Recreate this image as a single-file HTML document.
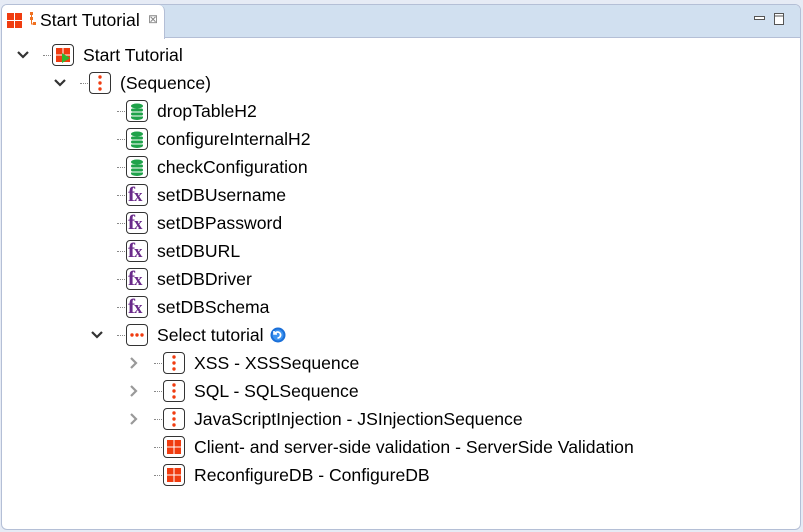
<!DOCTYPE html>
<html><head><meta charset="utf-8"><style>
*{margin:0;padding:0;box-sizing:border-box}
body{width:803px;height:532px;background:#e6ebf5;position:relative;overflow:hidden;font-family:"Liberation Sans",sans-serif;font-size:17.6px;color:#000}
#frame{position:absolute;left:1px;top:4px;width:800px;height:526px;background:#fff;border:1px solid #b4bfd6;border-radius:6px;overflow:hidden}
#bar{position:absolute;left:0;top:0;right:0;height:33px;background:#d1e0f0;border-bottom:1px solid #b4bfd6}
#tab{position:absolute;left:0;top:0;width:163px;height:34px;background:#fff;border-right:1px solid #b4bfd6;border-radius:0 6px 0 0}
.row{position:absolute;height:28px;line-height:28px;white-space:nowrap}
.ic{position:absolute;width:22px;height:22px;border:1px solid #333;border-radius:4px;background:#fff;top:3px;line-height:normal}
.dots{position:absolute;top:14px;width:8px;border-top:1px dotted #888}
.chev{position:absolute;top:6px;width:16px;height:16px}
</style></head><body>
<div id="frame">
<div id="bar"></div>
<div id="tab">
 <svg style="position:absolute;left:5px;top:7px" width="34" height="20"><rect x="0" y="1" width="7" height="7" fill="#f03c10"/><rect x="8" y="1" width="7" height="7" fill="#f03c10"/><rect x="0" y="9" width="7" height="7" fill="#f03c10"/><rect x="8" y="9" width="7" height="7" fill="#f03c10"/><rect x="23" y="0" width="3" height="3" fill="#f07020"/><rect x="23" y="5" width="3" height="3" fill="#f07020"/><rect x="26" y="10" width="3" height="3" fill="#f07020"/><path d="M24.5 3v9h2" stroke="#f07020" fill="none"/></svg>
 <span style="position:absolute;left:38px;top:5px;font-size:17.6px">Start Tutorial</span>
 <span style="position:absolute;left:146px;top:7px;font-size:12px;color:#888">⊠</span>
</div>
<svg style="position:absolute;left:752px;top:7px" width="30" height="14"><rect x="0.5" y="4.5" width="10" height="3" fill="#fff" stroke="#555"/><rect x="20.5" y="1.5" width="9" height="11" fill="#fff" stroke="#555"/><line x1="20" y1="4" x2="30" y2="4" stroke="#555"/></svg>
</div>
<div id="tree" style="position:absolute;left:0;top:0">
</div>
<script>
const seq='<svg width="20" height="20" style="position:absolute;left:0;top:0"><circle cx="10" cy="4" r="1.7" fill="#f03c10"/><circle cx="10" cy="10" r="1.7" fill="#f03c10"/><circle cx="10" cy="16" r="1.7" fill="#f03c10"/></svg>';
const sel='<svg width="20" height="20" style="position:absolute;left:0;top:0"><circle cx="5" cy="10" r="1.7" fill="#f03c10"/><circle cx="10" cy="10" r="1.7" fill="#f03c10"/><circle cx="15" cy="10" r="1.7" fill="#f03c10"/></svg>';
const grid='<svg width="20" height="20" style="position:absolute;left:0;top:0"><rect x="3" y="3" width="6.5" height="6.5" fill="#f03c10"/><rect x="10.5" y="3" width="6.5" height="6.5" fill="#f03c10"/><rect x="3" y="10.5" width="6.5" height="6.5" fill="#f03c10"/><rect x="10.5" y="10.5" width="6.5" height="6.5" fill="#f03c10"/></svg>';
const start='<svg width="20" height="20" style="position:absolute;left:0;top:0"><rect x="3" y="3" width="6.5" height="6.5" fill="#f03c10"/><rect x="10.5" y="3" width="6.5" height="6.5" fill="#f03c10"/><rect x="3" y="10.5" width="6.5" height="6.5" fill="#f03c10"/><rect x="10.5" y="10.5" width="6.5" height="6.5" fill="#f03c10"/><path d="M9 8l8 5-8 5z" fill="#2fb52f"/></svg>';
const db='<svg width="20" height="20" style="position:absolute;left:0;top:0"><ellipse cx="10" cy="5" rx="6" ry="2.5" fill="#1fa24a"/><rect x="4" y="7.5" width="12" height="3" rx="1.5" fill="#1fa24a"/><rect x="4" y="11.5" width="12" height="3" rx="1.5" fill="#1fa24a"/><path d="M4 15.5h12v1a6 2.5 0 0 1-12 0z" fill="#1fa24a"/></svg>';
const fx='<span style="position:absolute;left:1px;top:-3px;font-family:\'Liberation Serif\',serif;font-weight:bold;color:#6a2a8a;font-size:21px;letter-spacing:-1px">f<span style="font-size:17px">x</span></span>';
const ch='<svg class="chev" viewBox="0 0 16 16"><path d="M3 5l5 5 5-5" stroke="#333" stroke-width="2.2" fill="none"/></svg>';
const cr='<svg class="chev" viewBox="0 0 16 16"><path d="M5 3l5 5-5 5" stroke="#999" stroke-width="2.2" fill="none"/></svg>';
const rows=[
[0,start,'Start Tutorial',ch],[1,seq,'(Sequence)',ch],
[2,db,'dropTableH2'],[2,db,'configureInternalH2'],[2,db,'checkConfiguration'],
[2,fx,'setDBUsername'],[2,fx,'setDBPassword'],[2,fx,'setDBURL'],[2,fx,'setDBDriver'],[2,fx,'setDBSchema'],
[2,sel,'Select tutorial <svg width="16" height="16" style="vertical-align:-2px;margin-left:2px"><circle cx="8" cy="8" r="7.5" fill="#1a6fd8"/><circle cx="8" cy="8" r="5.5" fill="#3d93f0"/><path d="M5 6.5a3 3 0 1 1 2.5 4.5" stroke="#fff" stroke-width="1.8" fill="none"/><path d="M4 4v3h3" stroke="#fff" stroke-width="1.6" fill="none"/></svg>',ch],
[3,seq,'XSS - XSSSequence',cr],[3,seq,'SQL - SQLSequence',cr],[3,seq,'JavaScriptInjection - JSInjectionSequence',cr],
[3,grid,'Client- and server-side validation - ServerSide Validation'],[3,grid,'ReconfigureDB - ConfigureDB']];
let h='';
rows.forEach((r,i)=>{const y=41+i*28,x=52+r[0]*37;
h+=`<div class="row" style="top:${y}px;left:0;width:800px">`+(r[3]?r[3].replace('class="chev"',`class="chev" style="left:${x-37}px"`):'')+
`<div class="dots" style="left:${x-9}px"></div><div class="ic" style="left:${x}px">${r[1]}</div><span style="position:absolute;left:${x+31}px">${r[2]}</span></div>`;});
document.getElementById('tree').innerHTML=h;
</script>
</body></html>
